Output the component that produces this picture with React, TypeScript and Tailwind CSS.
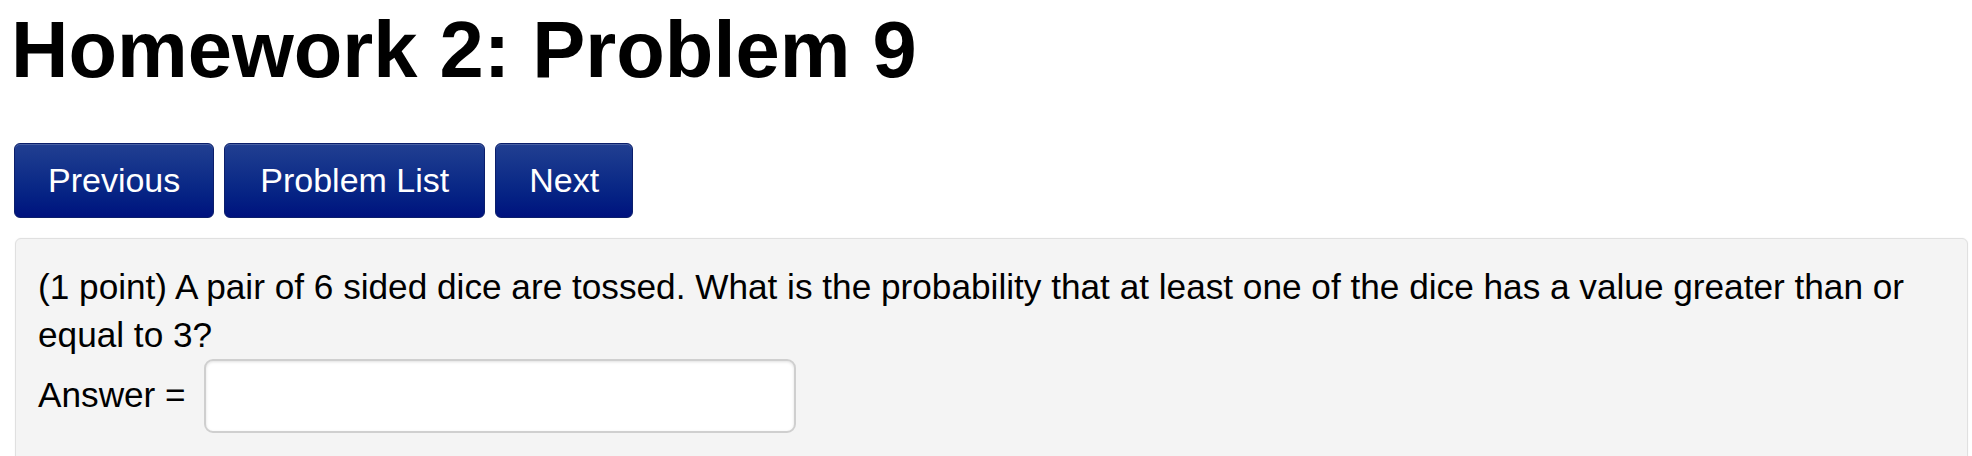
import React from "react";

const navButton =
  "flex h-[75px] items-center justify-center rounded-[6px] border border-[#0b1e6b] bg-gradient-to-b from-[#213f91] to-[#00117e] px-[33px] text-[34px] leading-none text-white shadow-[inset_0_1px_0_rgba(255,255,255,0.18)]";

export default function App() {
  return (
    <div
      className="h-[456px] w-[1972px] overflow-hidden bg-white pl-[15px] pr-[4px] pt-[10px] text-black"
      style={{ fontFamily: '"Liberation Sans", Arial, Helvetica, sans-serif' }}
    >
      <h1 className="-ml-[4px] text-[79.5px] font-bold leading-none">Homework 2: Problem 9</h1>

      <div className="mt-[53px] flex gap-[10px] -ml-[1px]">
        <button className={navButton}>Previous</button>
        <button className={`${navButton} w-[261px]`}>Problem List</button>
        <button className={`${navButton} w-[138px]`}>Next</button>
      </div>

      <div className="mt-[20px] h-[260px] rounded-[6px] border border-[#e0e0e0] bg-[#f4f4f4] pl-[22px] pr-[24px] pt-[24px] shadow-[0_0_2px_rgba(0,0,0,0.06)]">
        <p className="text-[35.2px] leading-[48px]">
          (1 point) A pair of 6 sided dice are tossed. What is the probability that at least one of the dice has a
          value greater than or equal to 3?
        </p>
        <div className="flex items-start">
          <span className="pt-[12px] text-[35.2px] leading-[48px]">Answer =</span>
          <input
            type="text"
            aria-label="Answer"
            className="ml-[18px] h-[74px] w-[592px] rounded-[9px] border-2 border-[#cfcfcf] bg-white px-3 text-[34px] shadow-[inset_0_1px_3px_rgba(0,0,0,0.12)] outline-none"
          />
        </div>
      </div>
    </div>
  );
}
